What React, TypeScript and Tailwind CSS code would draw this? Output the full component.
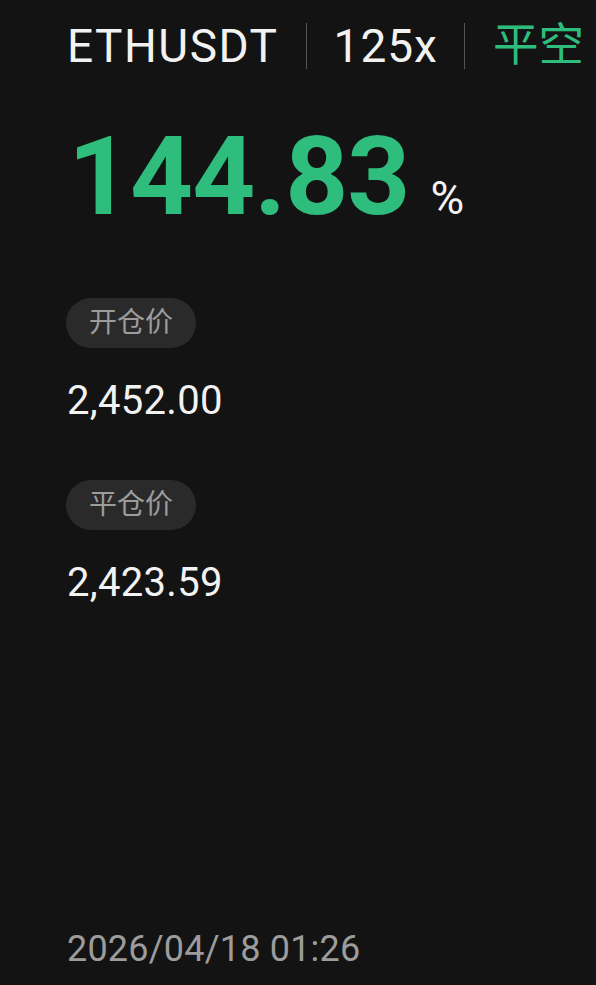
export default function App() {
  return (
    <div
      className="w-[596px] h-[985px] bg-[#131313] flex flex-col pl-[67px] overflow-hidden"
      style={{ fontFamily: 'Roboto, "Noto Sans CJK SC", sans-serif' }}
    >
      {/* Header: symbol | leverage | side */}
      <div className="flex items-center mt-[22px] h-[48px] whitespace-nowrap">
        <span className="text-[46px] leading-none text-[#f2f2f2] tracking-[1.5px]">ETHUSDT</span>
        <span className="w-px h-[46px] bg-[#555] ml-[27px] mr-[27px]" />
        <span className="text-[46px] leading-none text-[#f2f2f2] tracking-[1px]">125x</span>
        <span className="w-px h-[46px] bg-[#555] ml-[26px] mr-[28px]" />
        <span className="text-[45.5px] leading-none text-[#2ebd7c]">平空</span>
      </div>

      {/* PnL */}
      <div className="flex items-baseline mt-[52px] ml-[1px]">
        <span className="text-[110px] leading-none font-bold text-[#2ebd7c] tracking-[-1px]">144.83</span>
        <span className="text-[46px] leading-none text-[#f2f2f2] ml-[21px]">%</span>
      </div>

      {/* Entry */}
      <div className="mt-[66px] flex flex-col items-start">
        <span className="h-[50px] w-[130px] rounded-full bg-[#2a2a2a] flex items-center justify-center text-[28px] text-[#9c9c9c] ml-[-1px]">
          开仓价
        </span>
        <span className="mt-[33px] text-[40px] leading-none text-[#f2f2f2] tracking-[0.3px]">2,452.00</span>
      </div>

      {/* Close */}
      <div className="mt-[59px] flex flex-col items-start">
        <span className="h-[50px] w-[130px] rounded-full bg-[#2a2a2a] flex items-center justify-center text-[28px] text-[#9c9c9c] ml-[-1px]">
          平仓价
        </span>
        <span className="mt-[33px] text-[40px] leading-none text-[#f2f2f2] tracking-[0.3px]">2,423.59</span>
      </div>

      <div className="mt-auto mb-[18px] text-[36px] leading-none text-[#9c9c9c] tracking-[0.2px]">2026/04/18 01:26</div>
    </div>
  );
}
